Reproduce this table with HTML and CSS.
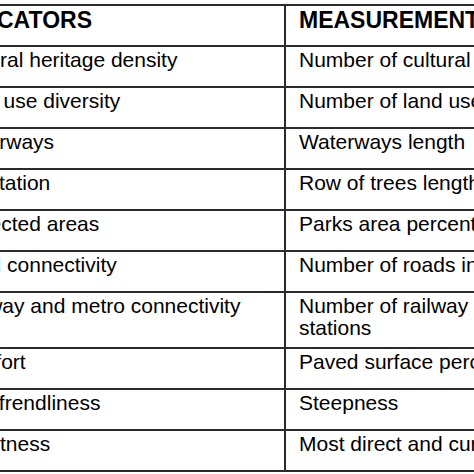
FILE: index.html
```html
<!DOCTYPE html>
<html>
<head>
<meta charset="utf-8">
<link rel="stylesheet" href="styles.css">
</head>
<body>
<table class="grid">
  <thead>
    <tr class="row">
      <th class="cell cell-ind">INDICATORS</th>
      <th class="cell cell-meas">MEASUREMENT</th>
    </tr>
  </thead>
  <tbody>
    <tr class="row"><td class="cell cell-ind">Cultural heritage density</td><td class="cell cell-meas">Number of cultural heritage sites</td></tr>
    <tr class="row"><td class="cell cell-ind">Land use diversity</td><td class="cell cell-meas">Number of land use types</td></tr>
    <tr class="row"><td class="cell cell-ind">Waterways</td><td class="cell cell-meas">Waterways length</td></tr>
    <tr class="row"><td class="cell cell-ind">Vegetation</td><td class="cell cell-meas">Row of trees length</td></tr>
    <tr class="row"><td class="cell cell-ind">Protected areas</td><td class="cell cell-meas">Parks area percentage</td></tr>
    <tr class="row"><td class="cell cell-ind">Road connectivity</td><td class="cell cell-meas">Number of roads intersections</td></tr>
    <tr class="row row-tall"><td class="cell cell-ind">Railway and metro connectivity</td><td class="cell cell-meas">Number of railway<br>stations</td></tr>
    <tr class="row"><td class="cell cell-ind">Comfort</td><td class="cell cell-meas">Paved surface percentage</td></tr>
    <tr class="row"><td class="cell cell-ind">Bike-frendliness</td><td class="cell cell-meas">Steepness</td></tr>
    <tr class="row"><td class="cell cell-ind">Directness</td><td class="cell cell-meas">Most direct and current routes</td></tr>
  </tbody>
</table>
</body>
</html>
```

FILE: styles.css
```css
html, body {
  margin: 0;
  padding: 0;
  background: #ffffff;
  overflow: hidden;
}

body {
  font-family: "Liberation Sans", Arial, sans-serif;
  font-size: 21px;
  color: #000000;
}

.grid {
  border-collapse: separate;
  border-spacing: 0;
  table-layout: fixed;
  width: 720px;
  margin-top: 4px;
  margin-left: -62px;
  border-top: 2px solid #2b2b2b;
}

.row {
  height: 41px;
}

.row-tall {
  height: 56px;
}

.cell {
  box-sizing: border-box;
  vertical-align: top;
  text-align: left;
  padding: 2px 0 0 13px;
  line-height: 22px;
  border-bottom: 2px solid #2b2b2b;
  white-space: nowrap;
  font-weight: normal;
}

.cell-ind {
  width: 348px;
  border-right: 2px solid #2b2b2b;
}

.cell-meas {
  width: 372px;
}

th.cell {
  font-weight: bold;
  font-size: 23px;
  line-height: 26px;
  padding-top: 1px;
}
```
